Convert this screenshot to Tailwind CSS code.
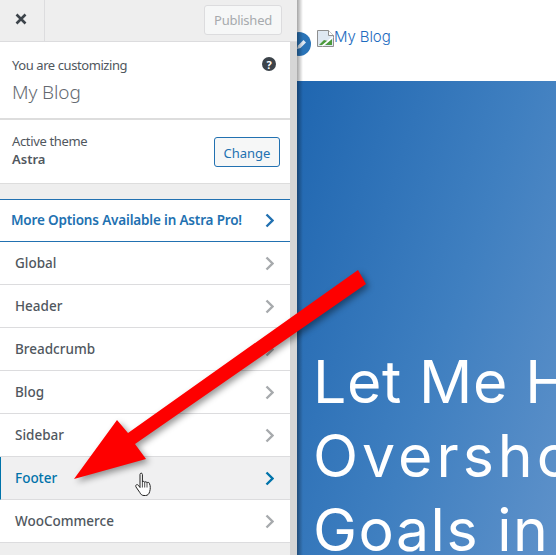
<!DOCTYPE html>
<html lang="en">
<head>
    <meta charset="UTF-8">
    <meta name="viewport" content="width=device-width, initial-scale=1.0">
    <title>Customizer</title>
    <script src="https://cdn.jsdelivr.net/npm/@tailwindcss/browser@4"></script>
</head>
<body class="font-['Noto_Sans',sans-serif]">
<div class="relative flex h-[555px] w-[556px] overflow-hidden bg-white">

    <!-- Customizer panel -->
    <div class="flex w-[297px] shrink-0 flex-col bg-[#eeeeee]">
        <div class="flex h-[42px] shrink-0 items-stretch border-b border-[#dcdcde]">
            <button class="flex w-[45px] items-center justify-center border-r border-[#dcdcde] pr-[3px] pb-[4px]">
                <svg width="12" height="12" viewBox="0 0 12 12"><path d="M1.500 1.500l9 9M10.500 1.500l-9 9" stroke="#3c434a" stroke-width="2.600" fill="none"/></svg>
            </button>
            <div class="flex flex-1 justify-end pt-[5px] pr-[15px]">
                <button class="h-[30px] w-[78px] rounded-[3px] border border-[#dcdcde] bg-[#f6f7f7] pt-[2px] text-[13px] tracking-[-0.25px] text-[#a7aaad]">Published</button>
            </div>
        </div>

        <div class="flex min-h-0 flex-1">
            <div class="w-[290px] shrink-0">
                <div class="flex h-[78px] justify-between border-b-2 border-[#dddddd] bg-white pt-[13px] pr-[14px] pl-[12px]">
                    <div>
                        <div class="text-[13px] leading-[20px] tracking-[-0.42px] text-[#50575e]">You are customizing</div>
                        <div class="mt-[4px] text-[19px] leading-[26px] font-light tracking-[-0.1px] text-[#646970]">My Blog</div>
                    </div>
                    <span class="mt-[2px] flex h-[14px] w-[14px] items-center justify-center rounded-full bg-[#3c434a] text-[11px] leading-none font-bold text-white">?</span>
                </div>
                <div class="flex h-[64px] items-center justify-between border-b border-[#dddddd] bg-white pr-[10px] pl-[12px]">
                    <div class="-mt-[4px] text-[13px] leading-[18px] text-[#50575e]">
                        <div class="tracking-[-0.35px]">Active theme</div>
                        <div class="font-semibold">Astra</div>
                    </div>
                    <button class="h-[30px] w-[66px] rounded-[3px] border border-[#2271b1] bg-[#f6f7f7] pt-[4px] text-[13px] text-[#2271b1]">Change</button>
                </div>
                <div class="h-[15px]"></div>
                <div class="flex h-[43px] items-center justify-between border-y border-[#2271b1] bg-white pr-[16px] pl-[11px] text-[13.500px] font-semibold tracking-[-0.17px] text-[#2271b1]">
                    More Options Available in Astra Pro!
                    <svg width="9" height="15" viewBox="0 0 9 15"><path d="M1.500 1.500l6 6-6 6" stroke="#2271b1" stroke-width="2.400" fill="none"/></svg>
                </div>
                <div class="flex h-[43px] items-center justify-between border-b border-[#dcdcde] bg-white pr-[16px] pl-[15px] text-[13.500px] font-medium text-[#50575e]">
                    Global
                    <svg width="9" height="15" viewBox="0 0 9 15"><path d="M1.500 1.500l6 6-6 6" stroke="#a7aaad" stroke-width="2.400" fill="none"/></svg>
                </div>
                <div class="flex h-[43px] items-center justify-between border-b border-[#dcdcde] bg-white pr-[16px] pl-[15px] text-[13.500px] font-medium text-[#50575e]">
                    Header
                    <svg width="9" height="15" viewBox="0 0 9 15"><path d="M1.500 1.500l6 6-6 6" stroke="#a7aaad" stroke-width="2.400" fill="none"/></svg>
                </div>
                <div class="flex h-[43px] items-center justify-between border-b border-[#dcdcde] bg-white pr-[16px] pl-[15px] text-[13.500px] font-medium text-[#50575e]">
                    Breadcrumb
                    <svg width="9" height="15" viewBox="0 0 9 15"><path d="M1.500 1.500l6 6-6 6" stroke="#a7aaad" stroke-width="2.400" fill="none"/></svg>
                </div>
                <div class="flex h-[43px] items-center justify-between border-b border-[#dcdcde] bg-white pr-[16px] pl-[15px] text-[13.500px] font-medium text-[#50575e]">
                    Blog
                    <svg width="9" height="15" viewBox="0 0 9 15"><path d="M1.500 1.500l6 6-6 6" stroke="#a7aaad" stroke-width="2.400" fill="none"/></svg>
                </div>
                <div class="flex h-[43px] items-center justify-between border-b border-[#dcdcde] bg-white pr-[16px] pl-[15px] text-[13.500px] font-medium text-[#50575e]">
                    Sidebar
                    <svg width="9" height="15" viewBox="0 0 9 15"><path d="M1.500 1.500l6 6-6 6" stroke="#a7aaad" stroke-width="2.400" fill="none"/></svg>
                </div>
                <div class="flex h-[43px] items-center justify-between border-b border-l border-[#dcdcde] border-l-[#0073aa] bg-[#f0f0f1] pr-[16px] pl-[14px] text-[13.500px] font-medium text-[#0073aa]">
                    Footer
                    <svg width="9" height="15" viewBox="0 0 9 15"><path d="M1.500 1.500l6 6-6 6" stroke="#0073aa" stroke-width="2.400" fill="none"/></svg>
                </div>
                <div class="flex h-[43px] items-center justify-between border-b border-[#dcdcde] bg-white pr-[16px] pl-[15px] text-[13.500px] font-medium text-[#50575e]">
                    WooCommerce
                    <svg width="9" height="15" viewBox="0 0 9 15"><path d="M1.500 1.500l6 6-6 6" stroke="#a7aaad" stroke-width="2.400" fill="none"/></svg>
                </div>
            </div>
            <!-- scrollbar -->
            <div class="w-[7px] bg-[#d6d6d6]"></div>
        </div>
    </div>

    <!-- Site preview -->
    <div class="relative flex min-w-0 flex-1 flex-col overflow-hidden">
        <div class="flex h-[81px] shrink-0 items-start bg-white pt-[28px] pl-[20px]">
            <svg class="mt-[2px] shrink-0" width="17" height="17" viewBox="0 0 17 17">
                <path d="M.5.5h11l5 5v11H.5z" fill="#dfe8f2" stroke="#8f8f8f"/>
                <path d="M11.500.5v5h5" fill="#fff" stroke="#8f8f8f"/>
                <path d="M2 15l5-5 4 1-5 4z" fill="#4c9a3c"/>
                <path d="M8 15l7-6v6z" fill="#4c9a3c"/>
                <path d="M5 16l11-9" stroke="#fff" stroke-width="1.500"/>
            </svg>
            <a class="font-['Inter',sans-serif] text-[15px] leading-[18px] font-light tracking-[-0.1px] text-[#1e6cc0]">My Blog</a>
        </div>
        <div class="flex-1 bg-[linear-gradient(108deg,#1f66b0_0%,#3f7fc0_55%,#5f92ca_100%)] pt-[264px] pl-[16px] font-['Inter',sans-serif] text-[59px] leading-[74px] whitespace-nowrap text-white">
            <div class="tracking-[0.6px]">Let Me H</div>
            <div class="tracking-[4px]">Oversho</div>
            <div class="tracking-[1.500px]">Goals in</div>
        </div>

        <!-- Edit shortcut, half under the panel's edge -->
        <div class="absolute top-[32px] -left-[10px] flex h-[24px] w-[24px] items-center justify-end rounded-full bg-[#2a74b8] pr-[4px]">
            <svg width="11" height="11" viewBox="0 0 11 11"><path d="M1 10l1-3.500 5.500-5.500 2.500 2.500-5.500 5.500z" fill="#dfe9f3"/></svg>
        </div>
        <!-- Panel shadow -->
        <div class="absolute inset-y-0 left-0 w-[6px] bg-linear-to-r from-black/35 to-transparent"></div>
    </div>

    <!-- Annotation arrow -->
    <svg class="absolute top-0 left-0 drop-shadow-[3px_3px_3px_rgba(0,0,0,0.4)]" width="556" height="555" viewBox="0 0 556 555">
        <path d="M358 270L366 284L135 444L146 459L74 479L117 420L128 433Z" fill="#fe0000"/>
    </svg>

    <!-- Hand cursor -->
    <svg class="absolute top-[472px] left-[134px]" width="20" height="26" viewBox="0 0 20 26">
        <path d="M6 2.500c0-1.800 2.400-1.800 2.400 0V10c.3-1 2.200-.8 2.300.4.300-1 2.200-.8 2.300.5.400-.9 2.400-.7 2.500.8 1 2 1 5.300.2 7.800-.6 2.500-2 4-4.200 4H10c-2 0-3.200-1-4.200-3L2 15c-1-2 1-3.200 2.400-1.700L6 15.500z" fill="#fff" stroke="#222" stroke-width="1" stroke-linejoin="round"/>
        <path d="M8.400 10v5.500M10.700 10.500v5M13 11v4.500" stroke="#222" stroke-width=".8" fill="none"/>
    </svg>
</div>
</body>
</html>
